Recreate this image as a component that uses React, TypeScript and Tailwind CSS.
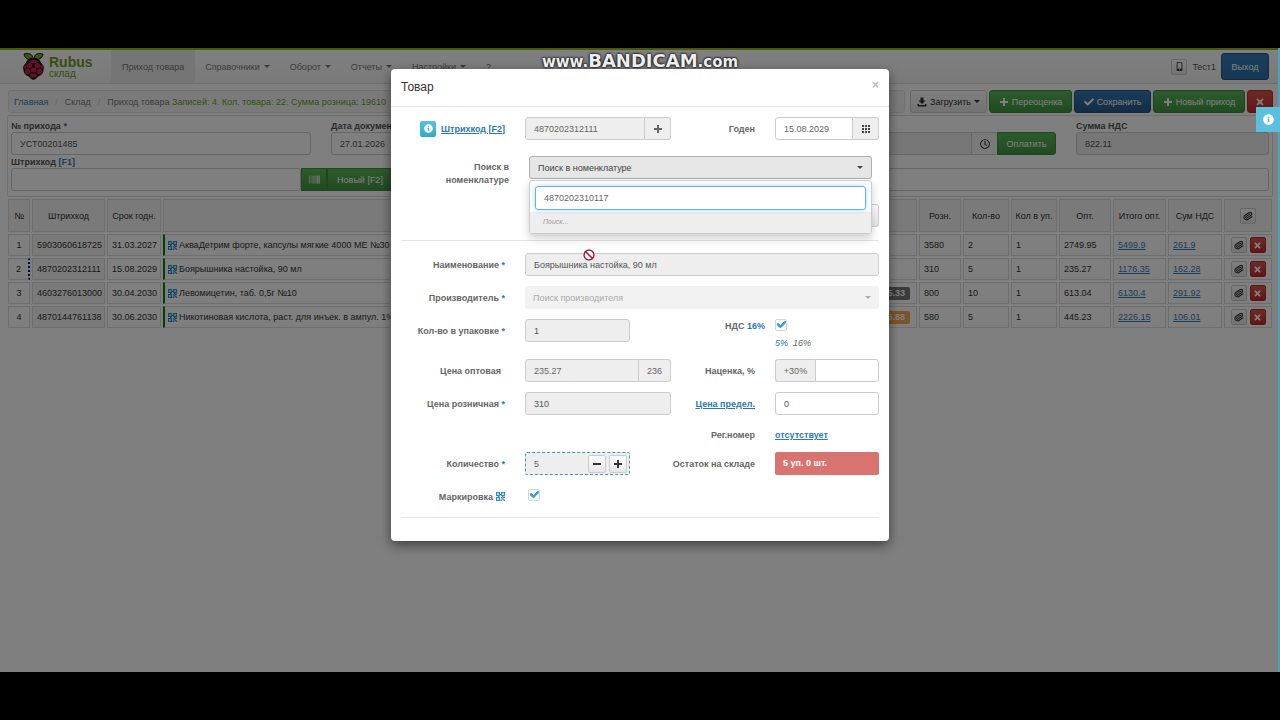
import type { ReactNode } from "react"
import { FaBarcode, FaCheck, FaInfoCircle, FaMobileAlt, FaRegClock, FaTimes } from "react-icons/fa"
import { Ban, Paperclip } from "lucide-react"

const navLinks = [
  { label: "Приход товара", active: true },
  { label: "Справочники", menu: true },
  { label: "Оборот", menu: true },
  { label: "Отчеты", menu: true },
  { label: "Настройки", menu: true },
  { label: "?" },
]

const rows = [
  { code: "5903060618725", date: "31.03.2027", name: "АкваДетрим форте, капсулы мягкие 4000 МЕ №30", price: "3580", qty: "2", pack: "1", opt: "2749.95", total: "5499.9", vat: "261.9" },
  { code: "4870202312111", date: "15.08.2029", name: "Боярышника настойка, 90 мл", price: "310", qty: "5", pack: "1", opt: "235.27", total: "1176.35", vat: "162.28", current: true },
  { code: "4603276013000", date: "30.04.2030", name: "Левомицетин, таб. 0,5г №10", badge: "805.33", badgeStyle: "bg-[#777777]", price: "800", qty: "10", pack: "1", opt: "613.04", total: "6130.4", vat: "291.92" },
  { code: "4870144761138", date: "30.06.2030", name: "Никотиновая кислота, раст. для инъек. в ампул. 1%", badge: "585.88", badgeStyle: "bg-[#f0ad4e]", price: "580", qty: "5", pack: "1", opt: "445.23", total: "2226.15", vat: "106.01" },
]

const headers = ["№", "Штрихкод", "Срок годн.", "", "Розн.", "Кол-во", "Кол в уп.", "Опт.", "Итого опт.", "Сум НДС"]

const green = "bg-linear-to-b from-[#5cb85c] to-[#419641] border border-[#3e8f3e] text-white"
const light = "bg-linear-to-b from-white to-[#e6e6e6] border border-[#cccccc] text-[#333333]"
const red = "bg-linear-to-b from-[#d9534f] to-[#c12e2a] border border-[#b92c28] text-white"
const field = "h-[23px] w-full min-w-0 rounded-[3px] border border-[#cccccc] bg-white px-2 text-[#555555] outline-none"
const fieldOff = "h-[23px] w-full min-w-0 rounded-[3px] border border-[#cccccc] bg-[#eeeeee] px-2 text-[#555555] outline-none"

function Caret() {
  return <span className="inline-block border-x-[3px] border-t-[3px] border-x-transparent border-t-current" />
}

function Logo() {
  return (
    <svg viewBox="0 0 42 54" className="h-[27px] w-[21px]" aria-hidden="true">
      <g stroke="#111" strokeWidth="2">
        <path d="M20 13C12 15 3 11 2 2c8-2 18-2 18 11z" fill="#75a928" />
        <path d="M22 13c8 2 17-2 18-11-8-2-18-2-18 11z" fill="#75a928" />
        <path
          d="M21 11c7-1 13 3 14 9 5 3 7 9 5 14 0 7-5 11-10 12-2 4-6 6-9 7-3-1-7-3-9-7-5-1-10-5-10-12-2-5 0-11 5-14 1-6 7-10 14-9z"
          fill="#111"
        />
      </g>
      <g fill="#d01c50">
        <path d="M12 16c4-3 14-3 18 0-2 3-5 5-9 5s-7-2-9-5z" />
        <ellipse cx="13" cy="25" rx="6" ry="5" />
        <ellipse cx="29" cy="25" rx="6" ry="5" />
        <ellipse cx="21" cy="34" rx="6" ry="5" />
        <ellipse cx="9" cy="37" rx="5" ry="6" />
        <ellipse cx="33" cy="37" rx="5" ry="6" />
        <ellipse cx="4" cy="28" rx="2" ry="4" />
        <ellipse cx="38" cy="28" rx="2" ry="4" />
        <ellipse cx="21" cy="45" rx="7" ry="4" />
      </g>
    </svg>
  )
}

function DownloadIcon() {
  return (
    <svg viewBox="0 0 20 20" className="size-[10px]" fill="currentColor" aria-hidden="true">
      <path d="M7 1h6v6h4l-7 7-7-7h4zM1 14h3v2h12v-2h3v5H1z" />
    </svg>
  )
}

function PlusIcon() {
  return (
    <svg viewBox="0 0 10 10" className="size-[10px]" fill="currentColor" aria-hidden="true">
      <path d="M4 1h2v3h3v2H6v3H4V6H1V4h3z" />
    </svg>
  )
}

function MinusIcon() {
  return (
    <svg viewBox="0 0 10 10" className="size-[10px]" fill="currentColor" aria-hidden="true">
      <path d="M1 4h8v2H1z" />
    </svg>
  )
}

function GridIcon() {
  return (
    <svg viewBox="0 0 10 10" className="size-[10px]" fill="currentColor" aria-hidden="true">
      <path d="M1 1h2v2H1zM4 1h2v2H4zM7 1h2v2H7zM1 4h2v2H1zM4 4h2v2H4zM7 4h2v2H7zM1 7h2v2H1zM4 7h2v2H4zM7 7h2v2H7z" />
    </svg>
  )
}

function QrIcon() {
  return (
    <svg viewBox="0 0 18 18" className="size-[9px] shrink-0 text-[#2a8cd0]" fill="currentColor" aria-hidden="true">
      <path
        fillRule="evenodd"
        d="M0 0h8v8H0zM2 2v4h4V2zM10 0h8v8h-8zM12 2v4h4V2zM0 10h8v8H0zM2 12v4h4v-4zM3 3h2v2H3zM13 3h2v2h-2zM3 13h2v2H3zM10 10h3v3h-3zM14 9h4v3h-4zM12 13h4v2h-4zM9 15h3v3H9zM15 15h3v3h-3zM8 4h2v2H8zM4 8h3v2H4zM12 8h2v2h-2z"
      />
    </svg>
  )
}

function Star() {
  return <span className="text-[#2a7ab0]"> *</span>
}

function Label({ children, htmlFor, plain }: { children: ReactNode; htmlFor?: string; plain?: boolean }) {
  return (
    <label
      htmlFor={htmlFor}
      className={`flex h-[23px] items-center justify-end gap-[3px] font-bold whitespace-nowrap text-[#666666] ${plain ? "pr-6" : "pr-5"}`}
    >
      {children}
    </label>
  )
}

function Check({ id, label }: { id: string; label: string }) {
  return (
    <span className="relative block size-3">
      <input
        id={id}
        type="checkbox"
        aria-label={label}
        defaultChecked
        className="peer block size-3 appearance-none rounded-[2px] border border-[#d5d5d5] bg-white"
      />
      <FaCheck className="pointer-events-none absolute top-px left-0.5 hidden size-[9px] text-[#2f9bd8] stroke-current stroke-[50px] peer-checked:block" />
    </span>
  )
}

function Navbar() {
  return (
    <header className="flex h-[36px] items-stretch border-t-2 border-b border-t-[#8fb021] border-b-[#dddddd] bg-linear-to-b from-white to-[#f5f5f5] pr-[11px] pl-[23px]">
      <a href="#" className="flex w-[88px] items-center gap-[5px]">
        <Logo />
        <span className="flex flex-col text-[#6f9c1f]">
          <span className="text-[14px] leading-[13px] font-bold">Rubus</span>
          <span className="text-[10px] leading-[9px]">склад</span>
        </span>
      </a>
      <nav className="flex">
        {navLinks.map((link) => (
          <a
            key={link.label}
            href="#"
            className={`flex items-center gap-1 text-[#777777] ${link.active ? "bg-[#ebebeb] px-[11px]" : "px-[10px]"}`}
          >
            {link.label}
            {link.menu && <Caret />}
          </a>
        ))}
      </nav>
      <div className="ml-auto flex items-center gap-[5px]">
        <button aria-label="Телефон" className={`flex size-4 items-center justify-center rounded-[2px] ${light}`}>
          <FaMobileAlt className="size-[9px]" />
        </button>
        <span className="text-[#555555]">Тест1</span>
        <button className="h-[27px] w-12 rounded-[3px] border border-[#245580] bg-linear-to-b from-[#337ab7] to-[#2a72ac] text-white">
          Выход
        </button>
      </div>
    </header>
  )
}

function Toolbar() {
  return (
    <div className="flex items-center gap-[2px] pr-[7px] pl-2">
      <div className="mr-[3px] flex h-[23px] flex-1 items-center gap-[7px] overflow-hidden rounded-[3px] border border-[#e3e3e3] bg-[#f5f5f5] px-[5px] whitespace-nowrap text-[#777777]">
        <a href="#" className="text-[#337ab7]">Главная</a>
        <span className="text-[#cccccc]">/</span>
        <span>Склад</span>
        <span className="text-[#cccccc]">/</span>
        <span>
          Приход товара <span className="text-[#6f9c1f]">Записей: 4. Кол. товара: 22. Сумма розница: 19610</span>
        </span>
      </div>
      <button className={`flex h-[23px] w-[77px] items-center justify-center gap-[3px] rounded-[3px] ${light}`}>
        <DownloadIcon /> Загрузить <Caret />
      </button>
      <button className={`flex h-[23px] w-[83px] items-center justify-center gap-[3px] rounded-[3px] ${green}`}>
        <PlusIcon /> Переоценка
      </button>
      <button className="flex h-[23px] w-[77px] items-center justify-center gap-[3px] rounded-[3px] border border-[#245580] bg-linear-to-b from-[#337ab7] to-[#265a88] text-white">
        <FaCheck className="size-[10px]" /> Сохранить
      </button>
      <button className={`flex h-[23px] w-[92px] items-center justify-center gap-[3px] rounded-[3px] ${green}`}>
        <PlusIcon /> Новый приход
      </button>
      <button aria-label="Закрыть приход" className={`flex h-[23px] w-[26px] items-center justify-center rounded-[3px] ${red}`}>
        <FaTimes className="size-[10px]" />
      </button>
    </div>
  )
}

function DocumentForm() {
  return (
    <section className="mx-[7px] mt-[2px] rounded-[2px] border border-[#dddddd] px-[3px] pt-[4px] pb-[5px]">
      <div className="grid grid-cols-[300px_1fr_193px] gap-x-5">
        <div>
          <label htmlFor="number" className="block h-3 font-bold text-[#555555]">№ прихода<Star /></label>
          <input id="number" defaultValue="УСТ00201485" className={field} />
        </div>
        <div>
          <label htmlFor="docdate" className="block h-3 font-bold text-[#555555]">Дата документа<Star /></label>
          <div className="flex">
            <div className="mr-5 w-[300px]"><input id="docdate" defaultValue="27.01.2026" className={field} /></div>
            <input aria-label="Оплачено" readOnly className="h-[23px] min-w-0 flex-1 border border-[#cccccc] bg-[#eeeeee]" />
            <button aria-label="История" className="flex h-[23px] w-[25px] items-center justify-center border-y border-[#cccccc] bg-[#f5f5f5] text-[#333333]">
              <FaRegClock className="size-[10px]" />
            </button>
            <button className={`h-[23px] w-[59px] rounded-r-[3px] ${green}`}>Оплатить</button>
          </div>
        </div>
        <div>
          <label htmlFor="vatsum" className="block h-3 font-bold text-[#555555]">Сумма НДС</label>
          <input id="vatsum" readOnly defaultValue="822.11" className={fieldOff} />
        </div>
      </div>
      <label htmlFor="barcode" className="mt-px block h-3 font-bold text-[#555555]">
        Штрихкод <span className="text-[#337ab7]">[F1]</span>
      </label>
      <div className="flex">
        <div className="w-[290px] shrink-0"><input id="barcode" className={field} /></div>
        <button aria-label="Сканировать" className={`flex h-[23px] w-[26px] shrink-0 items-center justify-center ${green}`}>
          <FaBarcode className="size-[11px]" />
        </button>
        <button className={`h-[23px] w-[66px] shrink-0 ${green}`}>Новый [F2]</button>
        <input aria-label="Комментарий" className={field} />
      </div>
    </section>
  )
}

function GoodsTable() {
  const cell = "h-[22px] border border-[#dddddd] px-1 text-[#333333]"
  return (
    <div className="px-[6px]">
      <table className="w-full table-fixed border-separate border-spacing-[2px] whitespace-nowrap">
        <colgroup>
          <col className="w-[22px]" />
          <col className="w-[73px]" />
          <col className="w-[54px]" />
          <col />
          <col className="w-[42px]" />
          <col className="w-[46px]" />
          <col className="w-[46px]" />
          <col className="w-[52px]" />
          <col className="w-[53px]" />
          <col className="w-[54px]" />
          <col className="w-[48px]" />
        </colgroup>
        <thead>
          <tr>
            {headers.map((h, i) => (
              <th key={i} className="h-[33px] border border-[#dddddd] bg-[#f5f5f5] text-center font-normal text-[#333333]">
                {h}
              </th>
            ))}
            <th className="h-[33px] border border-[#dddddd] bg-[#f5f5f5]">
              <button aria-label="Файлы" className={`mx-auto flex size-4 items-center justify-center rounded-[2px] ${light}`}>
                <Paperclip className="size-[10px] rotate-12" strokeWidth={2.5} />
              </button>
            </th>
          </tr>
        </thead>
        <tbody>
          {rows.map((r, i) => (
            <tr key={r.code}>
              <td className={`h-[22px] border text-center text-[#333333] ${r.current ? "border-r-2 border-[#dddddd] border-r-[#0000cc] [border-right-style:dotted]" : "border-[#dddddd]"}`}>
                {i + 1}
              </td>
              <td className={`${cell} bg-[#f5f5f5]`}>{r.code}</td>
              <td className={cell}>{r.date}</td>
              <td className="h-[22px] border border-l-2 border-[#dddddd] border-l-[#008000] px-[3px] text-[#333333]">
                <div className="flex items-center gap-[2px]">
                  <QrIcon />
                  {r.name}
                  {r.badge && (
                    <span className={`mr-[3px] ml-auto h-[13px] rounded-[2px] px-[5px] leading-[13px] font-bold text-white ${r.badgeStyle}`}>
                      {r.badge}
                    </span>
                  )}
                </div>
              </td>
              <td className={cell}>{r.price}</td>
              <td className={cell}>{r.qty}</td>
              <td className={cell}>{r.pack}</td>
              <td className={cell}>{r.opt}</td>
              <td className={cell}><a href="#" className="text-[#337ab7] underline">{r.total}</a></td>
              <td className={cell}><a href="#" className="text-[#337ab7] underline">{r.vat}</a></td>
              <td className="h-[22px] border border-[#dddddd]">
                <div className="flex justify-center gap-[3px]">
                  <button aria-label="Файл" className={`flex size-4 items-center justify-center rounded-[2px] ${light}`}>
                    <Paperclip className="size-[10px] rotate-12" strokeWidth={2.5} />
                  </button>
                  <button aria-label="Удалить" className={`flex size-4 items-center justify-center rounded-[2px] ${red}`}>
                    <FaTimes className="size-[9px]" />
                  </button>
                </div>
              </td>
            </tr>
          ))}
        </tbody>
      </table>
    </div>
  )
}

function ProductDialog() {
  const grid = "grid grid-cols-[124px_146px_104px_104px]"
  const link = "font-bold text-[#2a7ab0] underline"
  return (
    <div role="dialog" aria-label="Товар" className="relative w-[498px] rounded-[4px] bg-white text-[#666666] shadow-[0_4px_12px_rgba(0,0,0,0.5)]">
      <div className="flex h-[38px] items-start justify-between border-b border-[#e5e5e5] px-[10px] pt-[10px]">
        <h4 className="text-[12px] leading-4 text-[#333333]">Товар</h4>
        <button aria-label="Закрыть" className="text-[12px] leading-3 font-bold text-[#bbbbbb]">×</button>
      </div>

      <div className="px-[10px] pt-[10px]">
        <div className={grid}>
          <div className="flex h-[23px] items-center justify-end gap-[5px] pr-5">
            <button aria-label="Информация" className="flex size-4 items-center justify-center rounded-[2px] bg-linear-to-b from-[#5bc0de] to-[#2aabd2] text-white">
              <FaInfoCircle className="size-[9px]" />
            </button>
            <a href="#" className={link}>Штрихкод [F2]</a>
          </div>
          <div className="flex">
            <input aria-label="Штрихкод" readOnly defaultValue="4870202312111" className="h-[23px] min-w-0 flex-1 rounded-l-[3px] border border-[#cccccc] bg-[#eeeeee] px-2" />
            <button aria-label="Добавить штрихкод" className="flex h-[23px] w-[26px] items-center justify-center rounded-r-[3px] border border-l-0 border-[#cccccc] bg-[#eeeeee]">
              <PlusIcon />
            </button>
          </div>
          <Label htmlFor="expires">Годен</Label>
          <div className="flex">
            <input id="expires" defaultValue="15.08.2029" className="h-[23px] min-w-0 flex-1 rounded-l-[3px] border border-[#cccccc] px-2" />
            <button aria-label="Календарь" className="flex h-[23px] w-[26px] items-center justify-center rounded-r-[3px] border border-l-0 border-[#cccccc] bg-[#eeeeee] text-[#444444]">
              <GridIcon />
            </button>
          </div>
        </div>

        {/* Поиск в номенклатуре */}
        <div className="mt-4 flex h-[85px] items-start border-b border-[#e5e5e5]">
          <div className="w-[108px] pt-[5px] text-right leading-[13px] font-bold">
            Поиск в<br />номенклатуре
          </div>
          <div className="relative ml-5 w-[343px]">
            <button aria-haspopup="listbox" aria-expanded="true" className="flex h-[23px] w-full items-center justify-between rounded-[3px] border border-[#adadad] bg-[#e6e6e6] px-2 text-[#444444]">
              Поиск в номенклатуре <Caret />
            </button>
            <div className="absolute top-6 left-0 z-10 w-full rounded-[3px] border border-[#cccccc] bg-white shadow-[0_4px_8px_rgba(0,0,0,0.2)]">
              <div className="px-[5px] pt-[5px] pb-[2px]">
                <input aria-label="Поиск" defaultValue="4870202310117" className="h-6 w-full rounded-[3px] border border-[#66afe9] px-2 shadow-[0_0_5px_rgba(102,175,233,0.5)] outline-none" />
              </div>
              <div className="h-[21px] bg-[#eeeeee] px-[13px] text-[7px] leading-[20px] text-[#999999] italic">Поиск...</div>
            </div>
          </div>
          <button aria-label="Очистить поиск" className={`-ml-2 mt-12 h-[23px] w-[15px] rounded-[3px] ${light}`} />
        </div>

        <div className="flex flex-col gap-[10px] pt-3">
          <div className={grid}>
            <Label htmlFor="name"><span>Наименование<Star /></span></Label>
            <input id="name" readOnly defaultValue="Боярышника настойка, 90 мл" className={`col-span-3 ${fieldOff}`} />
          </div>
          <div className={grid}>
            <Label htmlFor="maker"><span>Производитель<Star /></span></Label>
            <div className="relative col-span-3 text-[#aaaaaa]">
              <select id="maker" disabled className="h-[23px] w-full appearance-none rounded-[3px] bg-[#f2f2f2] px-2 opacity-100">
                <option>Поиск производителя</option>
              </select>
              <span className="pointer-events-none absolute inset-y-0 right-2 flex items-center"><Caret /></span>
            </div>
          </div>
          <div className={`${grid} h-[30px]`}>
            <Label htmlFor="pack"><span>Кол-во в упаковке<Star /></span></Label>
            <div className="w-[105px]"><input id="pack" readOnly defaultValue="1" className={fieldOff} /></div>
            <label htmlFor="vat" className="pr-[10px] pt-px text-right font-bold">
              НДС <span className="text-[#2a7ab0]">16%</span>
            </label>
            <div className="flex flex-col gap-[6px]">
              <Check id="vat" label="НДС 16%" />
              <div className="flex gap-[5px] italic"><a href="#" className="text-[#2a7ab0]">5%</a><span>16%</span></div>
            </div>
          </div>
          <div className={grid}>
            <Label htmlFor="opt" plain>Цена оптовая</Label>
            <div className="flex">
              <input id="opt" readOnly defaultValue="235.27" className="h-[23px] min-w-0 flex-1 rounded-l-[3px] border border-[#cccccc] bg-[#eeeeee] px-2" />
              <span className="flex h-[23px] w-8 items-center justify-center rounded-r-[3px] border border-l-0 border-[#cccccc] bg-[#eeeeee]">236</span>
            </div>
            <Label htmlFor="markup">Наценка, %</Label>
            <div className="flex">
              <span className="flex h-[23px] w-10 items-center justify-center rounded-l-[3px] border border-r-0 border-[#cccccc] bg-[#eeeeee]">+30%</span>
              <input id="markup" className="h-[23px] min-w-0 flex-1 rounded-r-[3px] border border-[#cccccc] px-2" />
            </div>
          </div>
          <div className={grid}>
            <Label htmlFor="retail"><span>Цена розничная<Star /></span></Label>
            <input id="retail" readOnly defaultValue="310" className={fieldOff} />
            <Label htmlFor="limit"><span className="text-[#2a7ab0] underline">Цена предел.</span></Label>
            <input id="limit" defaultValue="0" className={field} />
          </div>
          <div className={`${grid} h-[17px]`}>
            <span className="col-start-3 pr-5 text-right leading-5 font-bold">Рег.номер</span>
            <a href="#" className={`leading-5 ${link}`}>отсутствует</a>
          </div>
          <div className={grid}>
            <Label htmlFor="qty"><span>Количество<Star /></span></Label>
            <div className="flex h-[23px] w-[105px] items-center gap-[3px] rounded-[2px] border border-dashed border-[#3aa0b0] bg-[#eeeeee] pr-[2px] pl-2">
              <input id="qty" readOnly defaultValue="5" className="min-w-0 flex-1 bg-transparent" />
              <button aria-label="Меньше" className={`flex size-[18px] items-center justify-center rounded-[2px] ${light}`}><MinusIcon /></button>
              <button aria-label="Больше" className={`flex size-[18px] items-center justify-center rounded-[2px] ${light}`}><PlusIcon /></button>
            </div>
            <Label>Остаток на складе</Label>
            <div className="h-[23px] rounded-[2px] bg-[#d9736f] px-2 leading-[23px] font-bold text-white">5 уп. 0 шт.</div>
          </div>
          <div className={grid}>
            <Label htmlFor="marking">Маркировка <QrIcon /></Label>
            <div className="pt-1 pl-[3px]"><Check id="marking" label="Маркировка" /></div>
          </div>
        </div>
        <div className="mt-[9px] h-6 border-t border-[#e5e5e5]" />
      </div>
      <Ban className="absolute top-[180px] left-[192px] size-3 rounded-full bg-white text-[#a8143c]" strokeWidth={3} />
    </div>
  )
}

export default function App() {
  return (
    <div className="flex min-h-screen flex-col bg-black py-12 font-['Liberation_Sans',Arial,sans-serif] text-[9px] leading-3">
      <main className="relative flex-1 overflow-hidden bg-white">
        <Navbar />
        <div className="h-[6px]" />
        <Toolbar />
        <DocumentForm />
        <GoodsTable />

        {/* Backdrop and dialog */}
        <div className="absolute inset-0 flex items-start justify-center bg-black/50 pt-[21px]">
          <ProductDialog />
        </div>

        <div className="absolute inset-y-0 right-0 w-0.5 bg-[#4aa3b8]" />
        <button aria-label="Справка" className="absolute top-[59px] right-0 flex h-[25px] w-6 items-center justify-center bg-[#5bc0de] text-white">
          <FaInfoCircle className="size-[11px]" />
        </button>
        <div className="pointer-events-none absolute inset-x-0 top-[3px] text-center font-['DejaVu_Sans',sans-serif] text-[15px] leading-5 font-bold text-[#eeeeee] [text-shadow:0_0_2px_#000,0_0_3px_#000]">
          www.<span className="text-[18px]">BANDICAM</span>.com
        </div>
      </main>
    </div>
  )
}
